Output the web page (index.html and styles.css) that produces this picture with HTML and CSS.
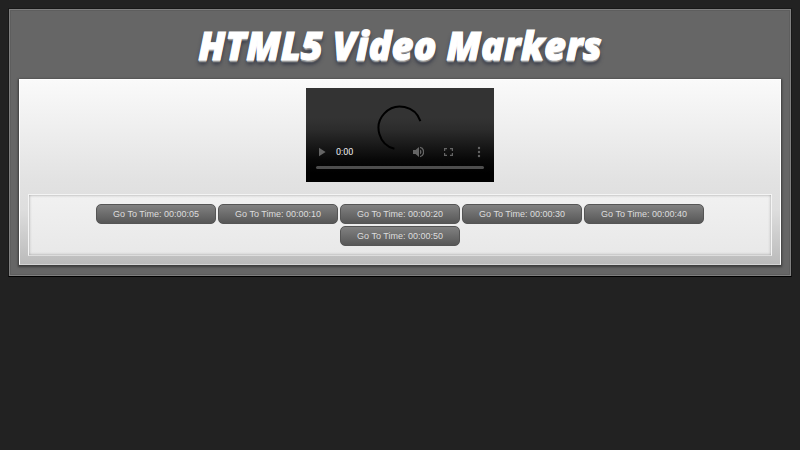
FILE: index.html
```html
<!DOCTYPE html>
<html lang="en">
<head>
<meta charset="utf-8">
<meta name="viewport" content="width=device-width, initial-scale=1">
<title>HTML5 Video Markers</title>
<link rel="stylesheet" href="styles.css">
</head>
<body>
<main class="frame">
  <h1 class="title">HTML5 Video Markers</h1>
  <section class="panel">
    <div class="player">
      <svg class="spinner" viewBox="0 0 46 46" aria-hidden="true"><path d="M43.400 16.100A21.500 21.500 0 1 0 17.400 43.800"/></svg>
      <div class="controls">
        <button class="icon" type="button" aria-label="Play"><svg viewBox="0 0 12 12"><path d="M3 1.700v8.600L9.600 6z"/></svg></button>
        <span class="time">0:00</span>
        <button class="icon" type="button" aria-label="Mute"><svg viewBox="0 0 12 12"><path d="M1 4v4h2.500L7 11V1L3.500 4zM8 3.600v4.800a2.700 2.700 0 0 0 0-4.800zM8 .8v1.200a4.200 4.200 0 0 1 0 8v1.200a5.300 5.300 0 0 0 0-10.400z"/></svg></button>
        <button class="icon" type="button" aria-label="Full screen"><svg viewBox="0 0 12 12"><path d="M2 2h3v1.200H3.200V5H2zM8 2h3v3H9.800V3.200H8zM2 7h1.200v1.800H5V10H2zM9.800 7H11v3H8V8.800h1.800z"/></svg></button>
        <button class="icon" type="button" aria-label="More options"><svg viewBox="0 0 12 12"><circle cx="7" cy="2" r="1.200"/><circle cx="7" cy="6" r="1.200"/><circle cx="7" cy="10" r="1.200"/></svg></button>
      </div>
      <input class="seek" type="range" min="0" max="100" value="0" aria-label="Seek" disabled>
    </div>
    <div class="markers">
      <button class="marker" type="button">Go To Time: 00:00:05</button>
      <button class="marker" type="button">Go To Time: 00:00:10</button>
      <button class="marker" type="button">Go To Time: 00:00:20</button>
      <button class="marker" type="button">Go To Time: 00:00:30</button>
      <button class="marker" type="button">Go To Time: 00:00:40</button>
      <button class="marker" type="button">Go To Time: 00:00:50</button>
    </div>
  </section>
</main>
</body>
</html>
```
FILE: styles.css
```css
* {
  box-sizing: border-box;
}

body {
  margin: 8px;
  background: #222;
  font-family: "Liberation Sans", Arial, sans-serif;
}

.frame {
  padding: 9px;
  border: 1px solid #181818;
  border-bottom-color: #000;
  background: #666;
  box-shadow: inset 0 0 0 1px #808080, inset 0 0 0 2px #5e5e5e;
}

.title {
  margin: 0;
  height: 61px;
  color: #fff;
  font: italic 800 38px/54px "Open Sans", sans-serif;
  text-align: center;
  -webkit-text-stroke: 1px #fff;
  text-shadow: 0 1px 0 #aaa, 0 2px 0 #999, 0 3px 1px #5d6067, 0 4px 4px #2c3040;
}

.panel {
  margin: 0 1px 2px;
  padding: 8px;
  border: 1px solid #fff;
  border-bottom-color: #d5d5d5;
  background: linear-gradient(#fafafa, #e2e2e2 55%, #dedede 70%, #bbb);
  box-shadow: 0 1px 2px 1px #3d3d3d;
}

.player {
  display: flex;
  flex-direction: column;
  position: relative;
  width: 188px;
  height: 94px;
  margin: 0 auto 12px;
  padding: 56px 10px 0;
  background: linear-gradient(#333 32%, #2c2c2c 44%, #080808 76%, #000 90%);
}

.spinner {
  position: absolute;
  top: 17px;
  left: 71px;
  width: 46px;
  height: 46px;
  fill: none;
  stroke: #000;
  stroke-width: 2;
}

.controls {
  position: relative;
  display: flex;
  align-items: center;
  height: 16px;
}

.icon {
  display: block;
  width: 12px;
  height: 12px;
  margin: 0 0 0 18px;
  padding: 0;
  border: 0;
  background: none;
}

.icon:first-child {
  margin: 0;
}

.icon svg {
  display: block;
  width: 12px;
  height: 12px;
  fill: #656565;
}

.time {
  flex: 1;
  margin-left: 8px;
  color: #eee;
  font: 9px/16px Roboto, sans-serif;
}

.seek {
  appearance: none;
  width: 100%;
  height: 3px;
  margin: 6px 0 0;
  border-radius: 2px;
  background: #4d4d4d;
}

.seek::-webkit-slider-thumb {
  appearance: none;
  width: 0;
  height: 0;
}

.markers {
  display: flex;
  flex-wrap: wrap;
  justify-content: center;
  gap: 2px;
  padding: 9px 40px;
  border: 1px solid #f4f4f4;
  border-bottom-color: #ddd;
  background: linear-gradient(#f1f1f1, #e8e8e8);
  box-shadow: inset 0 0 3px #999;
}

.marker {
  width: 120px;
  height: 20px;
  padding: 0;
  border: 1px solid #555;
  border-radius: 5px;
  background: linear-gradient(#818181, #575757);
  color: #ddd;
  font: 9px/16px "Liberation Sans", Arial, sans-serif;
}
```
